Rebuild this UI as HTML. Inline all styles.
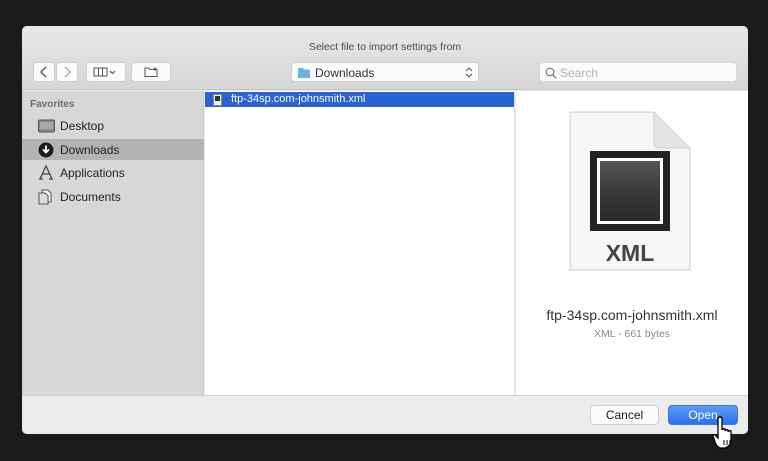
<!DOCTYPE html>
<html><head><style>
*{margin:0;padding:0;box-sizing:border-box}
body{width:768px;height:461px;background:#1b1b1b;font-family:"Liberation Sans",sans-serif;position:relative;overflow:hidden}
.dlg{position:absolute;left:22px;top:26px;width:726px;height:408px;background:#ececec;border-radius:5px;overflow:hidden}
.tb{position:absolute;left:0;top:0;width:726px;height:64px;background:linear-gradient(#e8e8e8,#d6d6d6);border-bottom:1px solid #c4c4c4}
.title{position:absolute;top:15px;left:0;width:726px;text-align:center;font-size:10.5px;color:#4c4c4c}
.btn{position:absolute;background:#fbfbfb;border:1px solid #cfcfcf;border-radius:4px;height:20px}
.side{position:absolute;left:0;top:65px;width:182px;height:305px;background:#d7d7d7;border-right:1px solid #c8c8c8}
.side .h{position:absolute;left:8px;top:8px;font-size:10px;color:#6d6d6d;font-weight:bold}
.it{position:absolute;left:0;width:182px;height:21px;font-size:12px;color:#222;padding-left:38px;line-height:22px}
.list{position:absolute;left:183px;top:65px;width:310px;height:305px;background:#fff;border-right:1px solid #e0e0e0}
.sel{position:absolute;left:0;top:1px;width:309px;height:15px;background:#2a62d4;color:#fff;font-size:11px;line-height:15px;padding-left:26px}
.prev{position:absolute;left:494px;top:65px;width:232px;height:305px;background:#fff}
.bot{position:absolute;left:0;top:369px;width:726px;height:39px;background:#ececec;border-top:1px solid #cfcfcf}
</style></head><body>
<div class="dlg">
<div class="tb">
<div class="title">Select file to import settings from</div>
<div class="btn" style="left:11px;top:36px;width:22px"><svg width="20" height="18"><path d="M12 4 L7 9 L12 14" stroke="#555" stroke-width="1.4" fill="none"/></svg></div>
<div class="btn" style="left:34px;top:36px;width:22px"><svg width="20" height="18"><path d="M8 4 L13 9 L8 14" stroke="#aaa" stroke-width="1.4" fill="none"/></svg></div>
<div class="btn" style="left:64px;top:36px;width:40px"><svg width="38" height="18"><rect x="7" y="5" width="13" height="8" stroke="#555" fill="none"/><path d="M11.5 5v8M15.5 5v8" stroke="#555"/><path d="M23 8l2.5 2.5L28 8" stroke="#555" stroke-width="1.2" fill="none"/></svg></div>
<div class="btn" style="left:109px;top:36px;width:40px"><svg width="38" height="18"><path d="M13 5h4l1 1.5h7v7H13z" stroke="#555" fill="none"/><path d="M23 4v4M21 6h4" stroke="#555"/></svg></div>
<div class="btn" style="left:269px;top:36px;width:188px"><svg style="position:absolute;left:5px;top:3px" width="14" height="13"><path d="M1 2h5l1 1.5h6V12H1z" fill="#69b3e8"/></svg><span style="position:absolute;left:23px;top:3px;font-size:12px;color:#333">Downloads</span><svg style="position:absolute;right:5px;top:3px" width="8" height="13"><path d="M1 5l3-3 3 3M1 8l3 3 3-3" stroke="#555" fill="none"/></svg></div>
<div class="btn" style="left:517px;top:36px;width:198px;border-color:#d6d6d6"><svg style="position:absolute;left:5px;top:4px" width="12" height="12"><circle cx="5" cy="5" r="3.8" stroke="#777" fill="none" stroke-width="1.2"/><path d="M8 8l3 3" stroke="#777" stroke-width="1.3"/></svg><span style="position:absolute;left:20px;top:3px;font-size:12px;color:#b0b0b0">Search</span></div>
</div>
<div class="side">
<div class="h">Favorites</div>
<div class="it" style="top:24px"><svg style="position:absolute;left:16px;top:4px" width="18" height="14"><rect x="0.5" y="1" width="16" height="12" rx="1.5" fill="#8a8a8a" stroke="#555"/><rect x="2" y="3" width="13" height="7" fill="#a8a8a8"/></svg>Desktop</div>
<div class="it" style="top:48px;background:#b3b3b3"><svg style="position:absolute;left:16px;top:3px" width="16" height="16"><circle cx="8" cy="8" r="7.5" fill="#1c1c1c"/><path d="M8 3.5v6.5M5 7.5l3 3 3-3" stroke="#fff" stroke-width="1.8" fill="none"/></svg>Downloads</div>
<div class="it" style="top:71px"><svg style="position:absolute;left:15px;top:2px" width="18" height="17"><path d="M3 15L9 2l6 13M5 10h8M2 15h4M12 15h4" stroke="#444" stroke-width="1.3" fill="none"/></svg>Applications</div>
<div class="it" style="top:95px"><svg style="position:absolute;left:16px;top:3px" width="16" height="16"><path d="M4 1h6l3 3v9H4z" fill="#eee" stroke="#555"/><path d="M1 4h6l3 3v8H1z" fill="#ddd" stroke="#555"/></svg>Documents</div>
</div>
<div class="list"><div class="sel"><svg style="position:absolute;left:8px;top:2px" width="10" height="12"><rect x="0.5" y="0.5" width="8" height="11" fill="#eee" stroke="#888"/><rect x="2" y="2" width="5" height="5" fill="#333"/></svg>ftp-34sp.com-johnsmith.xml</div></div>
<div class="prev">
<svg style="position:absolute;left:50px;top:18px" width="128" height="166">
<defs><linearGradient id="g" x1="0" y1="0" x2="0" y2="1"><stop offset="0" stop-color="#555"/><stop offset="0.5" stop-color="#3a3a3a"/><stop offset="1" stop-color="#2a2a2a"/></linearGradient></defs>
<path d="M4 3h84l36 36v122H4z" fill="#f6f6f6" stroke="#ccc"/>
<path d="M88 3v30q0 6 6 6h30" fill="#e4e4e4" stroke="#ccc"/>
<rect x="24" y="42" width="80" height="80" fill="#222"/>
<rect x="31" y="49" width="66" height="66" fill="#fff"/>
<rect x="34" y="52" width="60" height="60" fill="url(#g)"/>
<text x="64" y="152" text-anchor="middle" font-family="Liberation Sans" font-weight="bold" font-size="23" fill="#444">XML</text>
</svg>
<div style="position:absolute;top:216px;left:0;width:232px;text-align:center;font-size:14px;color:#333">ftp-34sp.com-johnsmith.xml</div>
<div style="position:absolute;top:237px;left:0;width:232px;text-align:center;font-size:10.5px;color:#888">XML - 661 bytes</div>
</div>
<div class="bot">
<div class="btn" style="left:568px;top:9px;width:69px;font-size:12px;color:#222;text-align:center;line-height:18px">Cancel</div>
<div class="btn" style="left:646px;top:9px;width:70px;font-size:12px;color:#fff;text-align:center;line-height:18px;background:linear-gradient(#5d9cf8,#2c6ff0);border-color:#3a76e6">Open</div>
</div>
</div>
<svg style="position:absolute;left:712px;top:416px" width="28" height="34"><path d="M6 2q2-2 4 0v12q1-2 3-1v2q1-2 3-1v2q1-2 3-1v9q0 6-6 8h-5q-3-1-5-6l-2-6q0-2 2-1l3 3z" fill="#fff" stroke="#000" stroke-width="1.3"/><path d="M12 24v5M15 24v5M18 24v5" stroke="#000"/></svg>
</body></html>
